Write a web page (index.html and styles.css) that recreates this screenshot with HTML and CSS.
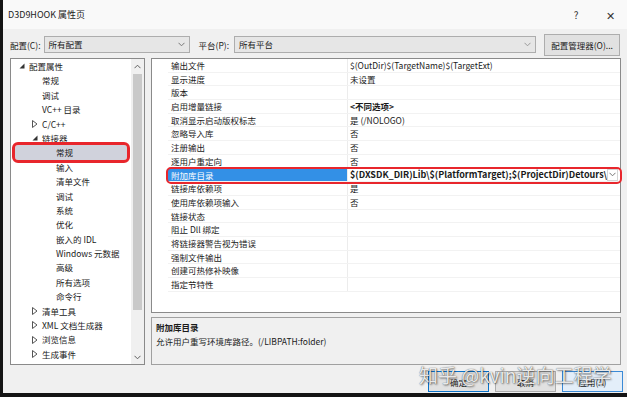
FILE: index.html
```html
<!DOCTYPE html>
<html lang="zh-CN">
<head>
  <meta charset="UTF-8" />
  <title>D3D9HOOK 属性页</title>
  <link rel="stylesheet" href="styles.css">
</head>
<body>
  <div class="screen">
    <div class="dialog">
      <div class="titlebar">
        <span class="title">D3D9HOOK 属性页</span>
        <span class="tbBtn">?</span>
        <span class="tbBtn close">✕</span>
      </div>

      <div class="toolbar">
        <span class="lbl">配置(C):</span>
        <div class="combo cfgCombo">所有配置
          <svg class="chev" width="7" height="5" viewBox="0 0 7 5"><polyline points="0.5,0.8 3.5,3.8 6.5,0.8" fill="none" stroke="#777" stroke-width="1"/></svg>
        </div>
        <span class="lbl platLbl">平台(P):</span>
        <div class="combo platCombo">所有平台
          <svg class="chev" width="7" height="5" viewBox="0 0 7 5"><polyline points="0.5,0.8 3.5,3.8 6.5,0.8" fill="none" stroke="#999" stroke-width="1"/></svg>
        </div>
        <button class="btn mgrBtn">配置管理器(O)...</button>
      </div>

      <div class="main">
        <div class="tree">
          <ul class="nodes">
            <li class="node lv0"><i class="exp"><svg width="6" height="6" viewBox="0 0 6 6"><polygon points="5.5,0.5 5.5,5.5 0.5,5.5" fill="#333"/></svg></i>配置属性</li>
            <li class="node lv1"><i class="exp"></i>常规</li>
            <li class="node lv1"><i class="exp"></i>调试</li>
            <li class="node lv1"><i class="exp"></i>VC++ 目录</li>
            <li class="node lv1"><i class="exp"><svg width="6" height="8" viewBox="0 0 6 8"><polygon points="0.5,0.5 5,4 0.5,7.5" fill="none" stroke="#555" stroke-width="1"/></svg></i>C/C++</li>
            <li class="node lv1"><i class="exp"><svg width="6" height="6" viewBox="0 0 6 6"><polygon points="5.5,0.5 5.5,5.5 0.5,5.5" fill="#333"/></svg></i>链接器</li>
            <li class="node lv2 sel"><i class="exp"></i>常规</li>
            <li class="node lv2"><i class="exp"></i>输入</li>
            <li class="node lv2"><i class="exp"></i>清单文件</li>
            <li class="node lv2"><i class="exp"></i>调试</li>
            <li class="node lv2"><i class="exp"></i>系统</li>
            <li class="node lv2"><i class="exp"></i>优化</li>
            <li class="node lv2"><i class="exp"></i>嵌入的 IDL</li>
            <li class="node lv2"><i class="exp"></i>Windows 元数据</li>
            <li class="node lv2"><i class="exp"></i>高级</li>
            <li class="node lv2"><i class="exp"></i>所有选项</li>
            <li class="node lv2"><i class="exp"></i>命令行</li>
            <li class="node lv1"><i class="exp"><svg width="6" height="8" viewBox="0 0 6 8"><polygon points="0.5,0.5 5,4 0.5,7.5" fill="none" stroke="#555" stroke-width="1"/></svg></i>清单工具</li>
            <li class="node lv1"><i class="exp"><svg width="6" height="8" viewBox="0 0 6 8"><polygon points="0.5,0.5 5,4 0.5,7.5" fill="none" stroke="#555" stroke-width="1"/></svg></i>XML 文档生成器</li>
            <li class="node lv1"><i class="exp"><svg width="6" height="8" viewBox="0 0 6 8"><polygon points="0.5,0.5 5,4 0.5,7.5" fill="none" stroke="#555" stroke-width="1"/></svg></i>浏览信息</li>
            <li class="node lv1"><i class="exp"><svg width="6" height="8" viewBox="0 0 6 8"><polygon points="0.5,0.5 5,4 0.5,7.5" fill="none" stroke="#555" stroke-width="1"/></svg></i>生成事件</li>
          </ul>
          <div class="vscroll">
            <div class="sArrow"><svg width="7" height="5" viewBox="0 0 7 5"><polyline points="0.5,4.2 3.5,1.2 6.5,4.2" fill="none" stroke="#606060" stroke-width="1"/></svg></div>
            <div class="track"><div class="thumb"></div></div>
            <div class="sArrow"><svg width="7" height="5" viewBox="0 0 7 5"><polyline points="0.5,0.8 3.5,3.8 6.5,0.8" fill="none" stroke="#606060" stroke-width="1"/></svg></div>
          </div>
        </div>

        <div class="right">
          <div class="grid">
            <div class="row"><span class="gut"></span><div class="cells"><span class="name">输出文件</span><span class="val">$(OutDir)$(TargetName)$(TargetExt)</span></div></div>
            <div class="row"><span class="gut"></span><div class="cells"><span class="name">显示进度</span><span class="val">未设置</span></div></div>
            <div class="row"><span class="gut"></span><div class="cells"><span class="name">版本</span><span class="val"></span></div></div>
            <div class="row"><span class="gut"></span><div class="cells"><span class="name">启用增量链接</span><span class="val bold">&lt;不同选项&gt;</span></div></div>
            <div class="row"><span class="gut"></span><div class="cells"><span class="name">取消显示启动版权标志</span><span class="val">是 (/NOLOGO)</span></div></div>
            <div class="row"><span class="gut"></span><div class="cells"><span class="name">忽略导入库</span><span class="val">否</span></div></div>
            <div class="row"><span class="gut"></span><div class="cells"><span class="name">注册输出</span><span class="val">否</span></div></div>
            <div class="row"><span class="gut"></span><div class="cells"><span class="name">逐用户重定向</span><span class="val">否</span></div></div>
            <div class="row"><span class="gut"></span><div class="cells picked"><span class="name">附加库目录</span><span class="val bold"><span class="clip">$(DXSDK_DIR)Lib\$(PlatformTarget);$(ProjectDir)Detours\</span><span class="drop"><svg width="7" height="5" viewBox="0 0 7 5"><polyline points="0.5,0.8 3.5,3.8 6.5,0.8" fill="none" stroke="#777" stroke-width="1"/></svg></span></span></div></div>
            <div class="row"><span class="gut"></span><div class="cells"><span class="name">链接库依赖项</span><span class="val">是</span></div></div>
            <div class="row"><span class="gut"></span><div class="cells"><span class="name">使用库依赖项输入</span><span class="val">否</span></div></div>
            <div class="row"><span class="gut"></span><div class="cells"><span class="name">链接状态</span><span class="val"></span></div></div>
            <div class="row"><span class="gut"></span><div class="cells"><span class="name">阻止 Dll 绑定</span><span class="val"></span></div></div>
            <div class="row"><span class="gut"></span><div class="cells"><span class="name">将链接器警告视为错误</span><span class="val"></span></div></div>
            <div class="row"><span class="gut"></span><div class="cells"><span class="name">强制文件输出</span><span class="val"></span></div></div>
            <div class="row"><span class="gut"></span><div class="cells"><span class="name">创建可热修补映像</span><span class="val"></span></div></div>
            <div class="row"><span class="gut"></span><div class="cells"><span class="name">指定节特性</span><span class="val"></span></div></div>
          </div>
          <div class="desc">
            <div class="descTitle">附加库目录</div>
            <div>允许用户重写环境库路径。(/LIBPATH:folder)</div>
          </div>
        </div>
      </div>

      <div class="footer">
        <button class="btn dlgBtn focus">确定</button>
        <button class="btn dlgBtn">取消</button>
        <button class="btn dlgBtn hover">应用(A)</button>
      </div>
    </div>
    <div class="watermark">知乎 @kvin逆向工程学</div>
  </div>
</body>
</html>
```

FILE: styles.css
```css
* { box-sizing: border-box; }
body {
  margin: 0;
  background: #141414;
  font-family: "Noto Sans CJK SC", sans-serif;
  font-size: 8.5px;
  color: #1a1a1a;
}
.screen {
  position: relative;
  width: 627px;
  height: 397px;
  padding-left: 3px;
  overflow: hidden;
}
.dialog {
  width: 624px;
  height: 393px;
  background: #f0f0f0;
  display: flex;
  flex-direction: column;
}

/* title bar */
.titlebar {
  height: 29px;
  background: #f9f9f9;
  display: flex;
  align-items: center;
  padding-left: 5px;
  font-size: 9px;
  color: #222;
}
.title { flex: 1; }
.tbBtn { width: 34px; text-align: center; font-size: 10px; color: #333; }
.close { font-size: 11px; }

/* config row */
.toolbar {
  height: 29px;
  display: flex;
  align-items: center;
  padding: 2px 10px 0 7px;
}
.lbl { margin-right: 3px; white-space: nowrap; flex-shrink: 0; }
.platLbl { margin-left: 9px; margin-right: 5px; }
.combo {
  flex-shrink: 0;
  height: 17px;
  line-height: 15px;
  background: #e6e6e6;
  border: 1px solid #adadad;
  padding-left: 4px;
  display: flex;
  align-items: center;
  white-space: nowrap;
}
.combo .chev { margin-left: auto; margin-right: 4px; }
.cfgCombo { width: 146px; }
.platCombo { width: 302px; }
.btn {
  font-family: inherit;
  font-size: 8.5px;
  color: #1a1a1a;
  background: #e1e1e1;
  border: 1px solid #adadad;
  padding: 0;
  white-space: nowrap;
  cursor: pointer;
}
.mgrBtn { width: 76px; height: 22px; margin-left: 8px; flex-shrink: 0; }

/* main area */
.main {
  height: 307px;
  display: flex;
  gap: 6px;
  padding: 0 6px 0 7px;
}
.tree {
  width: 135px;
  border: 1px solid #8a8a8a;
  background: #fff;
  display: flex;
}
.nodes {
  list-style: none;
  margin: 0;
  padding: 0;
  flex: 1;
}
.node {
  height: 14.4px;
  line-height: 14.4px;
  white-space: nowrap;
  display: flex;
  align-items: center;
}
.exp { width: 10px; display: flex; align-items: center; }
.lv0 { padding-left: 8px; }
.lv1 { padding-left: 21px; }
.lv2 { padding-left: 35px; }
.node.sel {
  margin: 0 4px;
  padding-left: 31px;
  background: #d0d2dc;
  position: relative;
  z-index: 1;
  outline: 3px solid #e8262c;
  border-radius: 3px;
}
.vscroll {
  width: 13px;
  background: #f0f0f0;
  display: flex;
  flex-direction: column;
}
.sArrow {
  height: 14px;
  display: flex;
  align-items: center;
  justify-content: center;
}
.track { flex: 1; padding: 1px 2px; }
.thumb { height: 236px; background: #c9c9c9; }

/* property grid */
.right {
  width: 470px;
  display: flex;
  flex-direction: column;
  gap: 4px;
}
.grid {
  height: 255px;
  border: 1px solid #8a8a8a;
  background: #fff;
}
.row { display: flex; height: 13.7px; }
.gut { width: 16px; flex-shrink: 0; }
.cells {
  flex: 1;
  min-width: 0;
  display: flex;
  border-bottom: 1px solid #f2f2f2;
  line-height: 12.7px;
}
.name {
  width: 180px;
  flex-shrink: 0;
  padding-left: 3px;
  border-right: 1px solid #ececec;
  white-space: nowrap;
}
.val {
  flex: 1;
  min-width: 0;
  padding-left: 2px;
  white-space: nowrap;
  overflow: hidden;
}
.bold { font-weight: bold; }
.picked {
  position: relative;
  z-index: 1;
  outline: 2px solid #e8262c;
  border-radius: 3px;
}
.picked .name { background: #3390e6; color: #fff; }
.picked .val { display: flex; align-items: center; padding-right: 2px; font-size: 9px; }
.clip { flex: 1; min-width: 0; overflow: hidden; }
.drop {
  flex-shrink: 0;
  width: 11px;
  height: 12px;
  border: 1px solid #d4d4d4;
  display: flex;
  align-items: center;
  justify-content: center;
}

/* description */
.desc {
  flex: 1;
  border: 1px solid #a0a0a0;
  background: #f0f0f0;
  padding: 2px 4px;
  line-height: 14px;
}
.descTitle { font-weight: bold; }

/* footer */
.footer {
  flex: 1;
  display: flex;
  justify-content: flex-end;
  padding: 6px 4px 0 0;
}
.dlgBtn { width: 61px; height: 21px; margin-left: 6px; }
.focus { border-color: #0a72c8; }
.hover { border-color: #3a8ad6; background: #e3eef9; }

.watermark {
  position: absolute;
  left: 419px;
  top: 361px;
  font-size: 19px;
  color: rgba(255, 255, 255, 0.9);
  text-shadow: 0 0 1px rgba(0, 0, 0, 0.7), 1px 1px 2px rgba(0, 0, 0, 0.45);
  white-space: nowrap;
}
```
